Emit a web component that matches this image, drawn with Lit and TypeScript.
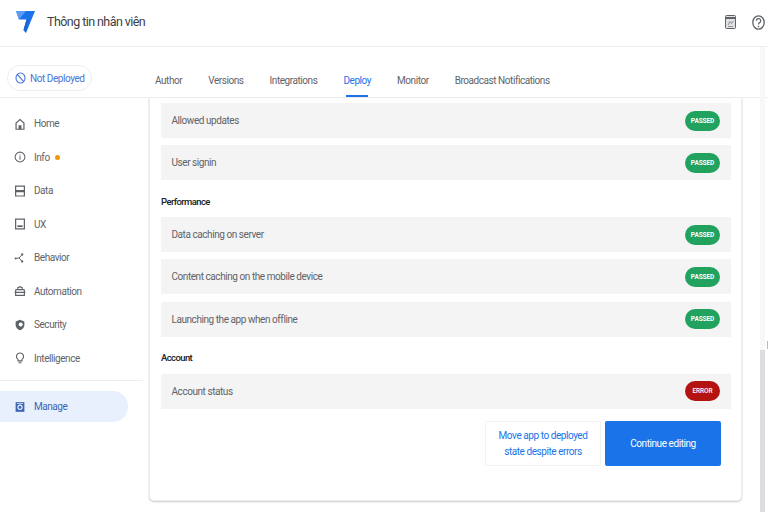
import { LitElement, html, css, svg } from "lit";
import { customElement } from "lit/decorators.js";

const G = "#5f6368";
const icons: Record<string, unknown> = {
  home: svg`<path d="M3.500 14V7L8 3l4.500 4v7z" fill="none" stroke="${G}" stroke-width="1.400"/><path d="M6.300 14V9.500h3.400V14z" fill="${G}"/>`,
  info: svg`<circle cx="8" cy="8" r="5.600" fill="none" stroke="${G}" stroke-width="1.200"/><path d="M8 7.200v3.800M8 5v1.200" stroke="${G}" stroke-width="1.200"/>`,
  data: svg`<path d="M3 2.500h10v5H3zM3 8.700h10v5H3z" fill="none" stroke="${G}" stroke-width="1.400"/>`,
  ux: svg`<path d="M3 2.500h10v11H3z" fill="none" stroke="${G}" stroke-width="1.400"/><path d="M5 10.500h6" stroke="${G}" stroke-width="2"/>`,
  behavior: svg`<path d="M2.500 8.500 7 8l3-3.500M7 8l3 3.500" fill="none" stroke="${G}" stroke-width="1.100"/><circle cx="10.500" cy="4" r="1.300" fill="${G}"/><circle cx="10.500" cy="12" r="1.300" fill="${G}"/><circle cx="3" cy="8.500" r="1.100" fill="${G}"/>`,
  automation: svg`<path d="M4 6.500h8a1 1 0 0 1 1 1V13H3V7.500a1 1 0 0 1 1-1zM5.500 6.500V4.200L8 3l2.500 1.200v2.300M1.800 9.500h12.400" fill="none" stroke="${G}" stroke-width="1.300"/>`,
  security: svg`<path d="M8 2 3 4v4c0 3 2.200 5.200 5 6 2.800-.8 5-3 5-6V4z" fill="${G}"/><circle cx="8.800" cy="7.500" r="2.300" fill="#fff"/>`,
  intel: svg`<path d="M8 2.200a4 4 0 0 0-2.300 7.300v1.800h4.600V9.500A4 4 0 0 0 8 2.200zM6.300 13.500h3.400" fill="none" stroke="${G}" stroke-width="1.200"/>`,
  manage: svg`<path d="M3 2.500h10v11H3z" fill="#3b66b5"/><circle cx="8" cy="8.300" r="2.400" fill="none" stroke="#e8f0fe" stroke-width="1.300"/><path d="M4.500 4h7" stroke="#e8f0fe" stroke-width=".8"/>`,
};

const nav = [
  ["home", "Home"],
  ["info", "Info"],
  ["data", "Data"],
  ["ux", "UX"],
  ["behavior", "Behavior"],
  ["automation", "Automation"],
  ["security", "Security"],
  ["intel", "Intelligence"],
];

const tabs = ["Author", "Versions", "Integrations", "Deploy", "Monitor", "Broadcast Notifications"];

type Row = { t: string; err?: boolean };
const groups: { title?: string; rows: Row[] }[] = [
  { rows: [{ t: "Allowed updates" }, { t: "User signin" }] },
  { title: "Performance", rows: [{ t: "Data caching on server" }, { t: "Content caching on the mobile device" }, { t: "Launching the app when offline" }] },
  { title: "Account", rows: [{ t: "Account status", err: true }] },
];

@customElement("app-root")
export class AppRoot extends LitElement {
  static styles = css`
    :host {
      display: flex;
      flex-direction: column;
      width: 768px;
      height: 512px;
      overflow: hidden;
      position: relative;
      background: #fff;
      font-family: Roboto, "Noto Sans", sans-serif;
      color: #5f6368;
      font-size: 10px;
      letter-spacing: -0.440px;
    }
    .top {
      flex: none;
      height: 46px;
      display: flex;
      align-items: center;
      border-bottom: 1px solid #eeeeee;
      box-sizing: content-box;
      padding: 0 3px 0 16px;
    }
    .logo { width: 19px; height: 22px; flex: none; margin-top: -2px; }
    .app-name { margin-left: 12px; font-size: 12.500px; color: #3c4043; letter-spacing: -0.560px; margin-top: -4px; }
    .top-icons { margin-left: auto; display: flex; align-items: center; gap: 16px; margin-top: -2px; }
    .top-icons svg { display: block; }
    .body { flex: 1; min-height: 0; display: flex; }
    .side { flex: none; width: 149px; display: flex; flex-direction: column; }
    .side-head {
      flex: none;
      height: 50px;
      box-sizing: content-box;
      border-bottom: 1px solid #eeeeee;
      padding-left: 7px;
    }
    .pill {
      margin-top: 18px;
      width: 85px;
      height: 26px;
      box-sizing: border-box;
      border: 1px solid #eeeeee;
      border-radius: 13px;
      display: flex;
      align-items: center;
      gap: 4px;
      padding-left: 7px;
      color: #4a74d6;
      font-size: 10px;
    }
    .side-body { flex: 1; display: flex; flex-direction: column; }
    .nav { display: flex; flex-direction: column; padding-top: 9px; }
    .item { height: 33.500px; display: flex; align-items: center; padding-left: 13px; gap: 7px; }
    .item svg { flex: none; }
    .dot { width: 5px; height: 5px; border-radius: 50%; background: #f29900; margin-left: -2px; }
    .rule { height: 1px; background: #eeeeee; margin: 5px 6px 0 0; }
    .active {
      margin-top: 10px;
      width: 128px;
      height: 31px;
      border-radius: 0 15px 15px 0;
      background: #e8f0fe;
      color: #3b66b5;
      display: flex;
      align-items: center;
      padding-left: 13px;
      gap: 7px;
      box-sizing: border-box;
    }
    .main { flex: 1; min-width: 0; display: flex; flex-direction: column; }
    .tabs {
      flex: none;
      height: 50px;
      border-bottom: 1px solid #eeeeee;
      display: flex;
      align-items: flex-end;
      padding-left: 6px;
      gap: 26px;
      box-sizing: content-box;
    }
    .tab { height: 28px; position: relative; box-sizing: border-box; line-height: 12px; padding-top: 6px; }
    .tab.on { color: #1a73e8; }
    .tab.on::after {
      content: "";
      position: absolute;
      left: 3px;
      right: 3px;
      bottom: 0;
      height: 2px;
      background: #1a73e8;
    }
    .scroll { flex: 1; min-height: 0; display: flex; padding-right: 26px; }
    .card {
      flex: 1;
      height: 403px;
      box-sizing: border-box;
      background: #fff;
      border: 1px solid #ececec;
      border-top: none;
      border-radius: 0 0 5px 5px;
      box-shadow: 0 1px 2px rgba(60, 64, 67, 0.28);
      padding: 5px 10px 0 11px;
      display: flex;
      flex-direction: column;
    }
    .group { display: flex; flex-direction: column; gap: 7.300px; }
    .group-title { color: #202124; font-weight: 500; font-size: 9.500px; letter-spacing: -0.600px; height: 14px; line-height: 14px; margin: 14.500px 0 1.100px; }
    .row {
      height: 35px;
      flex: none;
      background: #f4f4f4;
      display: flex;
      align-items: center;
      justify-content: space-between;
      padding: 0 11px 0 10.500px;
      box-sizing: border-box;
    }
    .badge {
      width: 35px;
      height: 20px;
      border-radius: 10px;
      background: #21a35f;
      color: #fff;
      font-size: 6.500px;
      font-weight: 700;
      display: flex;
      align-items: center;
      justify-content: center;
      letter-spacing: -0.100px;
    }
    .badge.err { background: #b31412; font-weight: 500; }
    .actions { display: flex; justify-content: flex-end; gap: 4px; padding-right: 10px; margin-top: 12px; }
    .btn {
      width: 116px;
      height: 45px;
      box-sizing: border-box;
      border-radius: 2px;
      display: flex;
      align-items: center;
      justify-content: center;
      text-align: center;
      line-height: 16px;
      padding-top: 1px;
    }
    .btn.ghost { border: 1px solid #f1f1f1; color: #1a73e8; }
    .btn.solid { background: #1a73e8; color: #fff; }
    .track {
      position: absolute;
      right: 3px;
      top: 47px;
      bottom: 0;
      width: 5px;
      background: #f8f8f8;
    }
    .thumb { position: absolute; left: 0; right: 0; bottom: 0; top: 303px; background: #dcdde1; }
    .mark { position: absolute; right: -3px; top: 294px; width: 1px; height: 8px; background: #c9b8a5; }
  `;

  private icon(name: string) {
    return html`<svg width="14" height="14" viewBox="0 0 16 16">${icons[name]}</svg>`;
  }

  render() {
    return html`
      <div class="top">
        <svg class="logo" viewBox="0 0 19 22">
          <path d="M0 0h19l-9 22-2.500-3 3-10.500H3z" fill="#1a73e8"/>
          <path d="M0 0h10L3 8.500z" fill="#5b9cf5"/>
          <path d="M10.500 8.500 14 8 9.800 21.500 7.500 19z" fill="#1b66d2"/>
        </svg>
        <span class="app-name">Thông tin nhân viên</span>
        <div class="top-icons">
          <svg width="11" height="14" viewBox="0 0 11 14">
            <rect x=".5" y=".5" width="10" height="13" rx="1" fill="#dfe1e4" stroke="#5f6368"/>
            <path d="M1 3h9" stroke="#5f6368" stroke-width="2"/>
            <path d="M3 10l2-3.500 1.500 2L8.500 6" fill="none" stroke="#80868b" stroke-width=".9"/>
            <path d="M3 11.500h5" stroke="#80868b" stroke-width=".8"/>
          </svg>
          <svg width="13" height="15" viewBox="0 0 13 15">
            <ellipse cx="6.500" cy="7.500" rx="5.700" ry="6.700" fill="none" stroke="#5f6368" stroke-width="1.300"/>
            <path d="M4.300 5.800a2.200 2.200 0 1 1 3.400 1.800c-.8.500-1.200 1-1.200 2" fill="none" stroke="#5f6368" stroke-width="1.200"/>
            <circle cx="6.500" cy="11.500" r=".8" fill="#5f6368"/>
          </svg>
        </div>
      </div>
      <div class="body">
        <div class="side">
          <div class="side-head">
            <div class="pill">
              <svg width="11" height="12" viewBox="0 0 11 12">
                <ellipse cx="5.500" cy="6" rx="4.500" ry="5" fill="none" stroke="#4a74d6" stroke-width="1.100"/>
                <path d="M2.300 2.300l6.400 7.400" stroke="#4a74d6" stroke-width="1.100"/>
              </svg>
              Not Deployed
            </div>
          </div>
          <div class="side-body">
            <div class="nav">
              ${nav.map(
                ([k, label]) => html`<div class="item">
                  ${this.icon(k)}<span>${label}</span>${k === "info" ? html`<span class="dot"></span>` : ""}
                </div>`
              )}
            </div>
            <div class="rule"></div>
            <div class="active">${this.icon("manage")}<span>Manage</span></div>
          </div>
        </div>
        <div class="main">
          <div class="tabs">
            ${tabs.map((t) => html`<div class="tab ${t === "Deploy" ? "on" : ""}">${t}</div>`)}
          </div>
          <div class="scroll">
            <div class="card">
              ${groups.map(
                (g) => html`<div class="group">
                  ${g.title ? html`<div class="group-title">${g.title}</div>` : ""}
                  ${g.rows.map(
                    (r) => html`<div class="row">
                      <span>${r.t}</span>
                      <span class="badge ${r.err ? "err" : ""}">${r.err ? "ERROR" : "PASSED"}</span>
                    </div>`
                  )}
                </div>`
              )}
              <div class="actions">
                <div class="btn ghost">Move app to deployed<br />state despite errors</div>
                <div class="btn solid">Continue editing</div>
              </div>
            </div>
          </div>
        </div>
      </div>
      <div class="track"><div class="thumb"></div><div class="mark"></div></div>
    `;
  }
}
